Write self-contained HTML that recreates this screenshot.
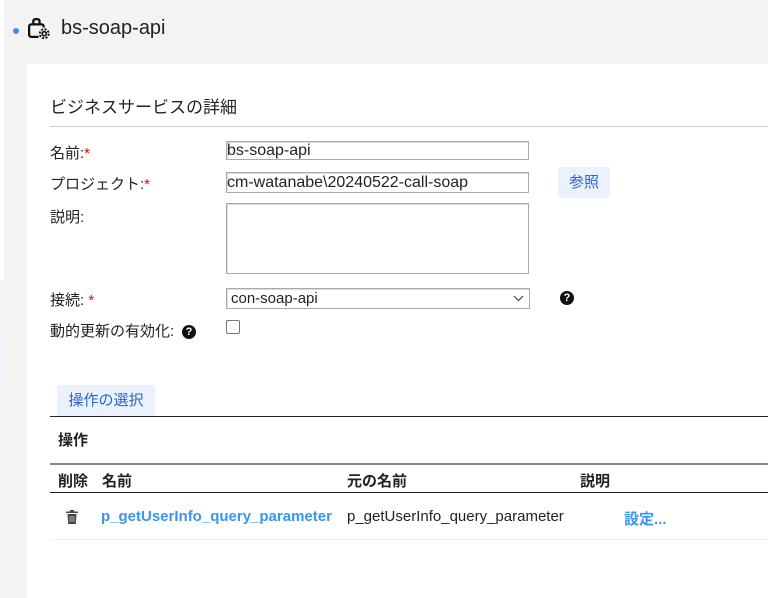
<!DOCTYPE html>
<html><head><meta charset="utf-8"><style>
body{margin:0;width:768px;height:598px;background:#f3f3f3;font-family:"Liberation Sans","Noto Sans CJK JP",sans-serif;position:relative;overflow:hidden;color:#222}
.a{position:absolute;white-space:nowrap}
.panel{position:absolute;left:27px;top:64px;width:741px;height:534px;background:#fff}
.lbl{font-size:15px}
.req{color:#e00}
.inp{position:absolute;border:1px solid #aaa;box-shadow:inset 1px 1px 0 #ddd;background:#fff;font-size:16px;line-height:17px;box-sizing:border-box;padding-left:0}
.q{position:absolute;width:14px;height:14px;border-radius:50%;background:#111;color:#fff;font-size:11px;font-weight:bold;text-align:center;line-height:14px}
.btn{position:absolute;background:#ebf2fd;color:#2a64c8;border-radius:3px;font-size:15px;text-align:center}
.th{font-size:15px;font-weight:bold}
</style></head><body>
<div class="a" style="left:0;top:0;width:4px;height:280px;background:#fff"></div>
<div class="a" style="left:0;top:337px;width:4px;height:44px;background:#eef3fb"></div>
<div class="a" style="left:13px;top:28px;width:6px;height:6px;border-radius:50%;background:#3b8ef0"></div>
<svg class="a" style="left:26px;top:16px" width="25" height="25" viewBox="0 0 24 24" fill="none" stroke="#111" stroke-width="2.2">
<path d="M5 8h10a2 2 0 0 1 2 2v1M12 20H5a2 2 0 0 1-2-2v-8a2 2 0 0 1 2-2"/><path d="M7 8V5a2 2 0 0 1 2-2h2a2 2 0 0 1 2 2v3"/>
<circle cx="17.5" cy="17" r="2" stroke-width="1.6"/><circle cx="17.5" cy="17" r="4.3" stroke-width="1.8" stroke-dasharray="2 1.4"/></svg>
<div class="a" style="left:61px;top:17px;font-size:20px">bs-soap-api</div>
<div class="panel"></div>
<div class="a" style="left:50px;top:93px;font-size:17px">ビジネスサービスの詳細</div>
<div class="a" style="left:50px;top:126px;width:718px;height:1px;background:#ccc"></div>
<div class="a lbl" style="left:50px;top:142px">名前:<span class="req">*</span></div>
<div class="a lbl" style="left:50px;top:173px">プロジェクト:<span class="req">*</span></div>
<div class="a lbl" style="left:50px;top:206px">説明:</div>
<div class="a lbl" style="left:50px;top:289px">接続: <span class="req">*</span></div>
<div class="a lbl" style="left:50px;top:320px">動的更新の有効化:</div>
<div class="q" style="left:182px;top:325px">?</div>
<div class="inp" style="left:226px;top:141px;width:303px;height:19px">bs-soap-api</div>
<div class="inp" style="left:226px;top:172px;width:303px;height:21px;line-height:19px">cm-watanabe\20240522-call-soap</div>
<div class="inp" style="left:226px;top:203px;width:303px;height:71px"></div>
<div class="inp" style="left:226px;top:288px;width:304px;height:21px;line-height:19px;padding-left:4px;font-size:15px">con-soap-api
<svg style="position:absolute;right:5px;top:6px" width="11" height="7"><path d="M1 1l4.5 4.5L10 1" stroke="#333" fill="none"/></svg></div>
<div class="q" style="left:560px;top:291px">?</div>
<div class="a" style="left:226px;top:320px;width:12px;height:12px;border:1px solid #777;border-radius:2px;background:#fff"></div>
<div class="btn" style="left:558px;top:167px;width:52px;height:31px;line-height:31px">参照</div>
<div class="btn" style="left:57px;top:385px;width:98px;height:31px;line-height:31px;border-radius:3px 3px 0 0">操作の選択</div>
<div class="a" style="left:50px;top:416px;width:718px;height:1px;background:#222"></div>
<div class="a th" style="left:58px;top:429px">操作</div>
<div class="a" style="left:50px;top:463px;width:718px;height:2px;background:#888"></div>
<div class="a th" style="left:58px;top:470px">削除</div>
<div class="a th" style="left:102px;top:470px">名前</div>
<div class="a th" style="left:347px;top:470px">元の名前</div>
<div class="a th" style="left:580px;top:470px">説明</div>
<div class="a" style="left:50px;top:492px;width:718px;height:1px;background:#222"></div>
<svg class="a" style="left:66px;top:510px" width="12" height="14" viewBox="0 0 12 14"><rect x="0" y="1.5" width="12" height="1.5" fill="#444"/><rect x="4" y="0" width="4" height="2" fill="#444"/><path d="M1.5 4h9l-.7 10H2.2z" fill="#444"/><path d="M4 6v6M6 6v6M8 6v6" stroke="#ccc" stroke-width=".8"/></svg>
<div class="a" style="left:101px;top:508px;font-size:15px;font-weight:bold;color:#3a95f0">p_getUserInfo_query_parameter</div>
<div class="a" style="left:347px;top:508px;font-size:15px">p_getUserInfo_query_parameter</div>
<div class="a" style="left:624px;top:508px;font-size:15px;font-weight:bold;color:#3a95f0">設定...</div>
<div class="a" style="left:50px;top:539px;width:718px;height:1px;background:#f0f0f0"></div>
</body></html>
